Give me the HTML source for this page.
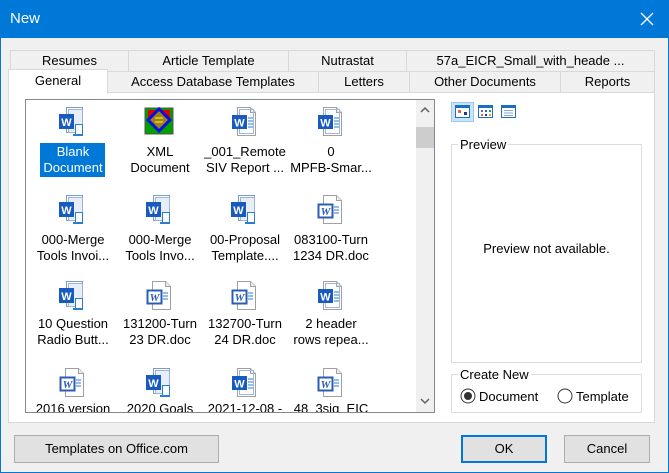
<!DOCTYPE html>
<html><head><style>
*{margin:0;padding:0;box-sizing:border-box}
body{width:669px;height:473px;background:#f0f0f0;font-family:"Liberation Sans",sans-serif;font-size:13px;color:#000;position:relative;overflow:hidden}
.a{position:absolute}
.win{left:0;top:0;width:669px;height:473px;border:1px solid #0078d7}
.title{left:0;top:0;width:669px;height:38px;background:#0078d7;color:#fff;font-size:15px}
.tab{position:absolute;background:#f0f0f0;border:1px solid #d9d9d9;text-align:center;line-height:20px;font-size:13px;white-space:nowrap;overflow:hidden}
.btn{position:absolute;background:#e1e1e1;border:1px solid #adadad;text-align:center;font-size:13px;line-height:26px}
.it{position:absolute;width:90px;text-align:center;line-height:16px;font-size:13px;white-space:nowrap}
.ic{position:absolute;width:32px;height:32px}
</style></head><body>
<div class="a title"><span class="a" style="left:10px;top:10px">New</span>
<svg class="a" style="left:640px;top:12px" width="14" height="14"><path d="M1 1L13 13M13 1L1 13" stroke="#fff" stroke-width="1.3"/></svg></div>
<div class="a win"></div>

<!-- tabs -->
<div class="tab" style="left:10px;top:50px;width:119px;height:22px">Resumes</div>
<div class="tab" style="left:128px;top:50px;width:161px;height:22px">Article Template</div>
<div class="tab" style="left:288px;top:50px;width:119px;height:22px">Nutrastat</div>
<div class="tab" style="left:406px;top:50px;width:249px;height:22px">57a_EICR_Small_with_heade ...</div>
<div class="tab" style="left:107px;top:71px;width:212px;height:22px">Access Database Templates</div>
<div class="tab" style="left:318px;top:71px;width:92px;height:22px">Letters</div>
<div class="tab" style="left:409px;top:71px;width:152px;height:22px">Other Documents</div>
<div class="tab" style="left:560px;top:71px;width:95px;height:22px">Reports</div>
<div class="a" style="left:8px;top:92px;width:647px;height:331px;background:#fff;border:1px solid #d9d9d9"></div>
<div class="a" style="left:8px;top:69px;width:100px;height:25px;background:#fff;border:1px solid #d9d9d9;border-bottom:none;text-align:center;line-height:22px">General</div>

<!-- list -->
<div class="a" style="left:25px;top:99px;width:410px;height:314px;border:1px solid #828790;background:#fff;overflow:hidden">
<div class="a" style="left:390px;top:0;width:18px;height:312px;background:#f0f0f0"></div>
<div class="a" style="left:390px;top:27px;width:18px;height:21px;background:#cdcdcd"></div>
<svg class="a" style="left:394px;top:6px" width="10" height="8"><path d="M1 6L5 2L9 6" stroke="#606060" fill="none" stroke-width="1.5"/></svg>
<svg class="a" style="left:394px;top:297px" width="10" height="8"><path d="M1 2L5 6L9 2" stroke="#606060" fill="none" stroke-width="1.5"/></svg>
</div>

<svg width="0" height="0" style="position:absolute"><defs>
<g id="t"><rect x="9.5" y="1.5" width="16" height="25" fill="#fff" stroke="#7a9cc8"/><rect x="11.5" y="3.5" width="14" height="23" fill="#e8eef8" stroke="#9ab3d8"/><rect x="2" y="8" width="15" height="15" fill="#185abd"/><text x="9.5" y="20" font-family="Liberation Sans" font-weight="bold" font-size="11" fill="#fff" text-anchor="middle">W</text><rect x="18.5" y="18.5" width="7" height="11" fill="#fff" stroke="#2b7cd3"/><path d="M16 29H26" stroke="#2b7cd3" stroke-width="2"/></g>
<g id="d"><path d="M8.5 1.5H21.5L26.5 6.5V29.5H8.5Z" fill="#fff" stroke="#a0a0a0"/><path d="M21.5 1.5V6.5H26.5" fill="#eee" stroke="#a0a0a0"/><rect x="10.5" y="3.5" width="14" height="24" fill="none" stroke="#9ab8e0"/><rect x="3" y="9" width="15" height="14" fill="#185abd"/><text x="10.5" y="20.5" font-family="Liberation Sans" font-weight="bold" font-size="11" fill="#fff" text-anchor="middle">W</text><path d="M19 12H24M19 15H24M19 18H24M19 21H24" stroke="#2b7cd3"/></g>
<g id="o"><path d="M8.5 1.5H21.5L26.5 6.5V29.5H8.5Z" fill="#fff" stroke="#a0a0a0"/><path d="M21.5 1.5V6.5H26.5" fill="#eee" stroke="#a0a0a0"/><rect x="3.5" y="10.5" width="14" height="13" fill="#fff" stroke="#2b5db5" stroke-width="2"/><text x="10.5" y="21" font-family="Liberation Serif" font-style="italic" font-weight="bold" font-size="11" fill="#2b5db5" text-anchor="middle">W</text><path d="M19 13H24M19 16H24M19 19H24" stroke="#2b7cd3"/></g>
</defs></svg>

<!-- row1 -->
<svg class="ic" style="left:57px;top:106px"><use href="#t"/></svg>
<div class="a" style="left:40px;top:143px;width:65px;height:34px;background:#0078d7"></div>
<div class="it" style="left:28px;top:144px;color:#fff">Blank<br>Document</div>
<svg class="ic" style="left:144px;top:106px"><rect x="1" y="2" width="28" height="26" fill="#00a000" stroke="#555"/><rect x="4" y="4" width="22" height="10" fill="#e00000"/><path d="M15 3L26 14L15 25L4 14Z" fill="#a08020" stroke="#0010e0" stroke-width="3"/><path d="M11 12H19M11 16H19" stroke="#ff0"/></svg>
<div class="it" style="left:115px;top:144px">XML<br>Document</div>
<svg class="ic" style="left:229px;top:106px"><use href="#d"/></svg>
<div class="it" style="left:200px;top:144px">_001_Remote<br>SIV Report ...</div>
<svg class="ic" style="left:315px;top:106px"><use href="#d"/></svg>
<div class="it" style="left:286px;top:144px">0<br>MPFB-Smar...</div>
<!-- row2 -->
<svg class="ic" style="left:57px;top:194px"><use href="#t"/></svg>
<div class="it" style="left:28px;top:232px">000-Merge<br>Tools Invoi...</div>
<svg class="ic" style="left:144px;top:194px"><use href="#t"/></svg>
<div class="it" style="left:115px;top:232px">000-Merge<br>Tools Invo...</div>
<svg class="ic" style="left:229px;top:194px"><use href="#t"/></svg>
<div class="it" style="left:200px;top:232px">00-Proposal<br>Template....</div>
<svg class="ic" style="left:315px;top:194px"><use href="#o"/></svg>
<div class="it" style="left:286px;top:232px">083100-Turn<br>1234 DR.doc</div>
<!-- row3 -->
<svg class="ic" style="left:57px;top:280px"><use href="#t"/></svg>
<div class="it" style="left:28px;top:316px">10 Question<br>Radio Butt...</div>
<svg class="ic" style="left:144px;top:280px"><use href="#o"/></svg>
<div class="it" style="left:115px;top:316px">131200-Turn<br>23 DR.doc</div>
<svg class="ic" style="left:229px;top:280px"><use href="#o"/></svg>
<div class="it" style="left:200px;top:316px">132700-Turn<br>24 DR.doc</div>
<svg class="ic" style="left:315px;top:280px"><use href="#d"/></svg>
<div class="it" style="left:286px;top:316px">2 header<br>rows repea...</div>
<!-- row4 -->
<div class="a" style="left:26px;top:360px;width:389px;height:52px;overflow:hidden">
<svg class="ic" style="left:31px;top:7px"><use href="#o"/></svg>
<div class="it" style="left:2px;top:41px">2016 version</div>
<svg class="ic" style="left:118px;top:7px"><use href="#t"/></svg>
<div class="it" style="left:89px;top:41px">2020 Goals</div>
<svg class="ic" style="left:203px;top:7px"><use href="#d"/></svg>
<div class="it" style="left:174px;top:41px">2021-12-08 -</div>
<svg class="ic" style="left:289px;top:7px"><use href="#o"/></svg>
<div class="it" style="left:260px;top:41px">48_3sig_EIC</div>
</div>

<!-- view icons -->
<div class="a" style="left:451px;top:102px;width:23px;height:20px;background:#cce4f7;border:1px solid #99c9ef"></div>
<svg class="a" style="left:455px;top:105px" width="16" height="14"><rect x=".5" y=".5" width="14" height="12" fill="#fff" stroke="#1a6fc4"/><rect x="0" y="0" width="15" height="3" fill="#1a6fc4"/><rect x="3" y="5" width="3" height="3" fill="#e8643c"/><rect x="9" y="7" width="3" height="3" fill="#1a3e8c"/></svg>
<svg class="a" style="left:478px;top:105px" width="16" height="14"><rect x=".5" y=".5" width="14" height="12" fill="#fff" stroke="#1a6fc4"/><rect x="0" y="0" width="15" height="3" fill="#1a6fc4"/><rect x="3" y="5" width="2" height="2" fill="#7a5cc4"/><rect x="7" y="5" width="2" height="2" fill="#1a6fc4"/><rect x="11" y="5" width="2" height="2" fill="#2a9a3c"/><rect x="3" y="9" width="2" height="2" fill="#e8643c"/><rect x="7" y="9" width="2" height="2" fill="#1a3e8c"/><rect x="11" y="9" width="2" height="2" fill="#e8a020"/></svg>
<svg class="a" style="left:501px;top:105px" width="16" height="14"><rect x=".5" y=".5" width="14" height="12" fill="#fff" stroke="#1a6fc4"/><rect x="0" y="0" width="15" height="3" fill="#1a6fc4"/><path d="M3 5.5H12M3 8H12M3 10.5H12" stroke="#8aa8cc"/></svg>

<!-- preview -->
<div class="a" style="left:451px;top:144px;width:191px;height:219px;border:1px solid #dcdcdc"></div>
<div class="a" style="left:458px;top:137px;background:#fff;padding:0 2px;line-height:16px">Preview</div>
<div class="a" style="left:451px;top:241px;width:191px;text-align:center">Preview not available.</div>
<!-- create new -->
<div class="a" style="left:451px;top:374px;width:191px;height:39px;border:1px solid #dcdcdc"></div>
<div class="a" style="left:458px;top:367px;background:#fff;padding:0 2px;line-height:16px">Create New</div>
<svg class="a" style="left:460px;top:388px" width="16" height="16"><circle cx="8" cy="8" r="7" fill="#fff" stroke="#333"/><circle cx="8" cy="8" r="4" fill="#333"/></svg>
<div class="a" style="left:479px;top:389px">Document</div>
<svg class="a" style="left:557px;top:388px" width="16" height="16"><circle cx="8" cy="8" r="7" fill="#fff" stroke="#333"/></svg>
<div class="a" style="left:576px;top:389px">Template</div>

<!-- buttons -->
<div class="btn" style="left:14px;top:435px;width:205px;height:28px">Templates on Office.com</div>
<div class="btn" style="left:461px;top:435px;width:86px;height:28px;border:2px solid #0078d7;line-height:24px">OK</div>
<div class="btn" style="left:564px;top:435px;width:86px;height:28px">Cancel</div>
</body></html>
